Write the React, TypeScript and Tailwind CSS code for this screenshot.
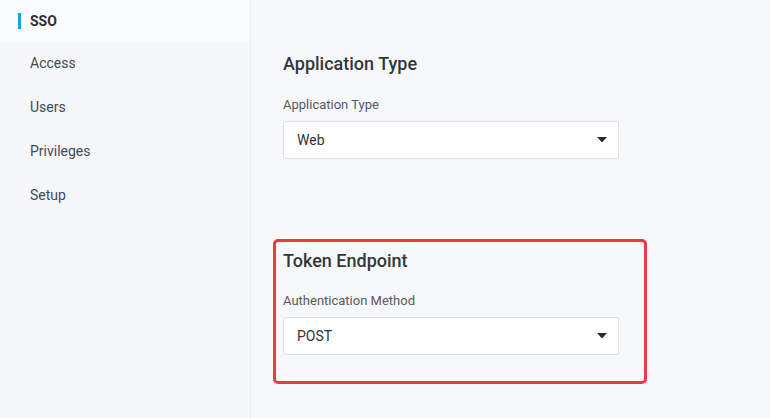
const navItems = ['Access', 'Users', 'Privileges', 'Setup'];

function Caret() {
  return (
    <svg width="10" height="6" viewBox="0 0 10 6" className="shrink-0">
      <path d="M0 0h10L5 5.5z" fill="#2b2b2b" />
    </svg>
  );
}

function SelectField({ label, value }: { label: string; value: string }) {
  return (
    <div>
      <p className="text-[13px] leading-4 text-[#555a60]">{label}</p>
      <div className="mt-[8px] flex h-[38px] w-[336px] items-center justify-between rounded-[2px] border border-[#dcdfe3] bg-white pl-[13px] pr-[11px]">
        <span className="text-[14px] text-[#2f3337]">{value}</span>
        <Caret />
      </div>
    </div>
  );
}

export default function App() {
  return (
    <div
      className="flex h-[418px] w-[770px] overflow-hidden bg-[#f7f8fa]"
      style={{ fontFamily: 'Roboto, "Liberation Sans", sans-serif' }}
    >
      <aside className="w-[251px] shrink-0 border-r border-[#eceef1] bg-[#f5f7f9]">
        <div className="flex h-[42px] items-center bg-[#fafbfc] pl-[18px]">
          <span className="h-[16px] w-[3px] bg-[#0ea5e9]" />
          <span className="ml-[9px] text-[14px] font-bold text-[#2b2f33]">SSO</span>
        </div>
        {navItems.map((item) => (
          <div key={item} className="flex h-[44px] items-center pl-[30px] pb-[2px] text-[14px] text-[#454a50]">
            {item}
          </div>
        ))}
      </aside>

      <main className="flex-1 pl-[22px]">
        <section className="ml-[10px] pt-[52px]">
          <h2 className="text-[18px] font-medium leading-6 text-[#33373b]">Application Type</h2>
          <div className="mt-[21px]">
            <SelectField label="Application Type" value="Web" />
          </div>
        </section>

        <section className="mt-[80px] w-[374px] rounded-[5px] border-[3px] border-[#ea3a40] px-[7px] pb-[26px] pt-[7px]">
          <h2 className="text-[18px] font-medium leading-6 text-[#33373b]">Token Endpoint</h2>
          <div className="mt-[20px]">
            <SelectField label="Authentication Method" value="POST" />
          </div>
        </section>
      </main>
    </div>
  );
}
